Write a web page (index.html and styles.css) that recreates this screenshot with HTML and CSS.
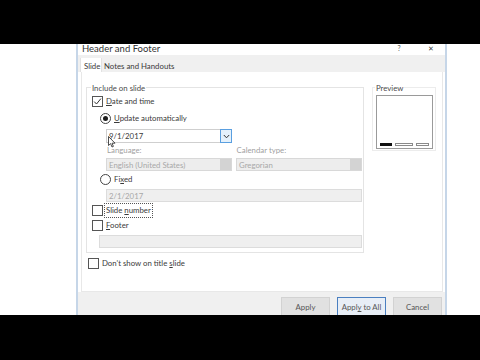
FILE: index.html
```html
<!DOCTYPE html>
<html>
<head>
<meta charset="utf-8">
<link rel="stylesheet" href="styles.css">
</head>
<body>
<div class="screen">
  <div class="bar top"></div>
  <div class="stage">
    <div class="dialog">
      <div class="titlebar">
        <span class="title">Header and Footer</span>
        <span class="help">?</span>
        <span class="close">✕</span>
      </div>
      <div class="tabs">
        <span class="tab active">Slide</span>
        <span class="tab">Notes and Handouts</span>
      </div>
      <div class="page">
        <div class="leftcol">
          <div class="group include">
            <div class="legend">Include on slide</div>
            <div class="row r-date">
              <span class="cb checked"><svg width="9" height="9" viewBox="0 0 9 9"><path d="M1.2 4.6 L3.5 7 L7.9 1.6" fill="none" stroke="#333" stroke-width="1"/></svg></span>
              <span class="lbl"><u>D</u>ate and time</span>
            </div>
            <div class="row r-update">
              <span class="radio on"><span class="dot"></span></span>
              <span class="lbl"><u>U</u>pdate automatically</span>
            </div>
            <div class="combo datecombo">
              <span class="ctext">9/1/2017</span>
              <span class="dropbtn"><svg width="7" height="5" viewBox="0 0 7 5"><path d="M0.8 1 L3.5 3.8 L6.2 1" fill="none" stroke="#333" stroke-width="1"/></svg></span>
              <svg class="cursor" width="8" height="12" viewBox="0 0 8 12"><path d="M0.5 0.5 L0.5 9.5 L2.6 7.6 L4 11 L5.4 10.4 L4 7.2 L7 7.2 Z" fill="#fff" stroke="#222" stroke-width="0.8"/></svg>
            </div>
            <div class="labels">
              <span class="sublbl lang">Language:</span>
              <span class="sublbl cal">Calendar type:</span>
            </div>
            <div class="combos">
              <div class="combo dis"><span class="ctext">English (United States)</span><span class="disbtn"></span></div>
              <div class="combo dis"><span class="ctext">Gregorian</span><span class="disbtn"></span></div>
            </div>
            <div class="row r-fixed">
              <span class="radio"></span>
              <span class="lbl">Fi<u>x</u>ed</span>
            </div>
            <div class="field fixedfield"><span class="ctext">2/1/2017</span></div>
            <div class="row r-slide">
              <span class="cb"></span>
              <span class="lbl focus">Slide <u>n</u>umber</span>
            </div>
            <div class="row r-footer">
              <span class="cb"></span>
              <span class="lbl"><u>F</u>ooter</span>
            </div>
            <div class="field footerfield"></div>
          </div>
          <div class="row r-dont">
            <span class="cb"></span>
            <span class="lbl">Don't show on title <u>s</u>lide</span>
          </div>
        </div>
        <div class="group preview">
          <div class="legend">Preview</div>
          <div class="pbox">
            <span class="pb black"></span>
            <span class="pb mid"></span>
            <span class="pb end"></span>
          </div>
        </div>
      </div>
      <div class="footer">
        <span class="btn">Apply</span>
        <span class="btn default">Appl<u>y</u> to All</span>
        <span class="btn">Cancel</span>
      </div>
    </div>
  </div>
  <div class="bar bottom"></div>
</div>
</body>
</html>
```

FILE: styles.css
```css
html, body {
  margin: 0;
  padding: 0;
  background: #fff;
}
.screen {
  width: 480px;
  height: 360px;
  overflow: hidden;
  display: flex;
  flex-direction: column;
  font-family: Lato, "Noto Sans", sans-serif;
  font-size: 7.8px;
  color: #3a3a3a;
}
.bar {
  background: #000;
  flex: none;
}
.bar.top { height: 44px; }
.bar.bottom { height: 45px; }
.stage {
  height: 271px;
  flex: none;
  display: flex;
}
.dialog {
  margin-left: 76px;
  width: 371px;
  height: 271px;
  box-sizing: border-box;
  border-left: 2px solid #c6d6e8;
  border-right: 2px solid #c6d6e8;
  background: #fff;
  display: flex;
  flex-direction: column;
  overflow: hidden;
}
.titlebar {
  height: 11px;
  flex: none;
  display: flex;
  align-items: flex-start;
  overflow: hidden;
  padding-left: 4px;
}
.title {
  font-size: 9.5px;
  line-height: 11px;
  margin-top: -1px;
  color: #333;
}
.help {
  margin-left: auto;
  width: 10px;
  text-align: center;
  font-size: 7px;
  line-height: 9px;
  color: #555;
}
.close {
  width: 10px;
  margin-left: 22px;
  margin-right: 9px;
  text-align: center;
  font-size: 7px;
  line-height: 9px;
  color: #444;
}
.tabs {
  height: 17px;
  flex: none;
  box-sizing: border-box;
  background: #f0f0f0;
  display: flex;
  align-items: flex-end;
  padding-left: 2px;
}
.tab {
  height: 14px;
  box-sizing: border-box;
  padding: 3px 2px 0;
  line-height: 10px;
  color: #3a3a3a;
}
.tab.active {
  background: #fff;
  padding: 3px 3px 0;
  border-left: 1px solid #e2e2e2;
  border-right: 1px solid #e2e2e2;
  width: 22px;
}
.page {
  height: 220px;
  flex: none;
  box-sizing: border-box;
  margin: 0 2px 0 3px;
  border: 1px solid #e8e8e8;
  border-top: none;
  display: flex;
  align-items: flex-start;
}
.leftcol {
  margin-left: 4px;
  width: 278px;
  margin-top: 15px;
  display: flex;
  flex-direction: column;
}
.group {
  box-sizing: border-box;
  border: 1px solid #e4e4e4;
}
.include {
  height: 166px;
  width: 278px;
  display: flex;
  flex-direction: column;
  align-items: flex-start;
}
.legend {
  margin-top: -5px;
  margin-left: 4px;
  padding: 0 1px;
  height: 10px;
  line-height: 10px;
  background: #fff;
  color: #4a4a4a;
}
.row {
  height: 12px;
  display: flex;
  align-items: center;
  gap: 3px;
}
.lbl {
  line-height: 11px;
  white-space: nowrap;
}
u { text-decoration-thickness: 1px; text-underline-offset: 1px; }
.cb {
  width: 11px;
  height: 11px;
  box-sizing: border-box;
  border: 1px solid #555;
  background: #fff;
  display: flex;
  align-items: center;
  justify-content: center;
  flex: none;
}
.radio {
  width: 11px;
  height: 11px;
  box-sizing: border-box;
  border: 1px solid #444;
  border-radius: 50%;
  background: #fff;
  display: flex;
  align-items: center;
  justify-content: center;
  flex: none;
}
.radio .dot {
  width: 5px;
  height: 5px;
  border-radius: 50%;
  background: #1e1e1e;
}
.r-date { margin-top: 2px; padding-left: 5px; }
.r-update { margin-top: 5px; padding-left: 13px; }
.combo {
  position: relative;
  box-sizing: border-box;
  height: 14px;
  width: 126px;
  border: 1px solid #cfcfcf;
  background: #fff;
  display: flex;
  align-items: center;
}
.ctext {
  padding-left: 2px;
  flex: 1;
  line-height: 12px;
  white-space: nowrap;
  overflow: hidden;
}
.datecombo { margin-top: 5px; margin-left: 19px; }
.dropbtn {
  width: 12px;
  height: 14px;
  margin: -1px -1px -1px 0;
  box-sizing: border-box;
  border: 1px solid #5a9fe0;
  background: #e5f1fb;
  display: flex;
  align-items: center;
  justify-content: center;
}
.cursor {
  position: absolute;
  left: 1px;
  top: 6px;
}
.labels {
  margin-top: 2px;
  margin-left: 20px;
  height: 10px;
  display: flex;
  color: #9f9f9f;
  line-height: 10px;
}
.sublbl.cal { margin-left: 95px; }
.combos {
  margin-top: 3px;
  margin-left: 19px;
  display: flex;
  gap: 4px;
}
.combo.dis {
  background: #ededed;
  border-color: #d8d8d8;
  color: #a8a8a8;
  height: 13px;
}
.disbtn {
  width: 11px;
  height: 11px;
  background: #d3d3d3;
}
.r-fixed { margin-top: 2px; padding-left: 13px; }
.field {
  box-sizing: border-box;
  height: 13px;
  background: #efefef;
  border: 1px solid #dcdcdc;
  color: #a8a8a8;
  display: flex;
  align-items: center;
}
.fixedfield { margin-top: 4px; margin-left: 19px; width: 256px; }
.r-slide { margin-top: 2px; padding-left: 5px; gap: 1px; }
.focus {
  border: 1px dotted #555;
  padding: 1px 1px;
  line-height: 11px;
}
.r-footer { margin-top: 3px; padding-left: 5px; }
.footerfield { margin-top: 4px; margin-left: 12px; width: 263px; }
.r-dont { margin-top: 4px; padding-left: 2px; }
.preview {
  margin-top: 15px;
  margin-left: 8px;
  width: 64px;
  height: 64px;
  display: flex;
  flex-direction: column;
  align-items: flex-start;
  border-color: #ececec;
}
.preview .legend { margin-left: 2px; }
.pbox {
  margin-top: 2px;
  margin-left: 3px;
  width: 57px;
  height: 54px;
  box-sizing: border-box;
  border: 1px solid #9a9a9a;
  display: flex;
  align-items: flex-end;
  padding: 0 2px 2px 3px;
  gap: 3px;
}
.pb {
  height: 3px;
  box-sizing: border-box;
}
.pb.black { width: 12px; background: #111; }
.pb.mid { width: 18px; border: 1px solid #8a8a8a; background: #fff; }
.pb.end { width: 13px; border: 1px solid #8a8a8a; background: #fff; }
.footer {
  flex: 1;
  background: #f0f0f0;
  display: flex;
  justify-content: flex-end;
  align-items: flex-start;
  gap: 7px;
  padding: 5px 3px 0 0;
}
.btn {
  width: 49px;
  height: 21px;
  box-sizing: border-box;
  border: 1px solid #d2d2d2;
  background: #e1e1e1;
  text-align: center;
  line-height: 19px;
  color: #555;
}
.btn.default {
  border: 1px solid #4a7fc0;
  background: #e8eef6;
}
```
